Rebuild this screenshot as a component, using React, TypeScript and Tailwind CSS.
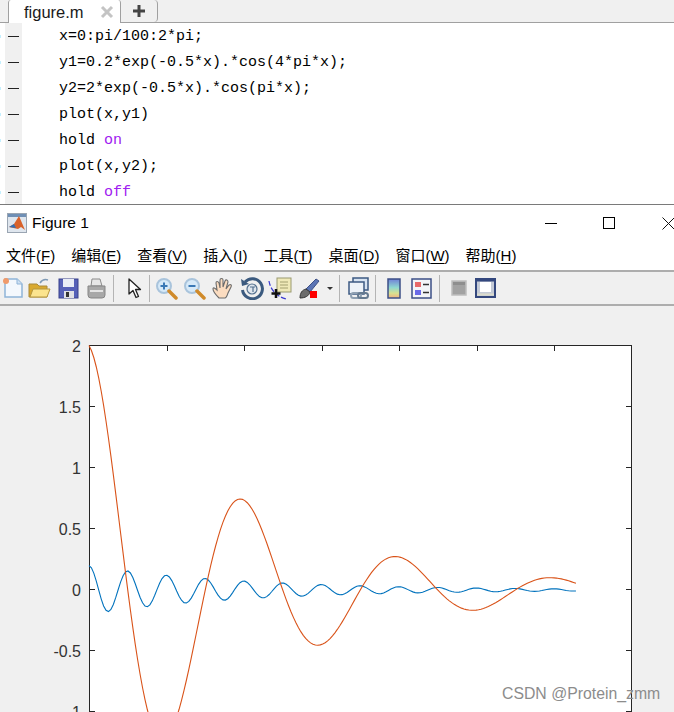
import React from 'react';

const codeLines = [
  [['x=0:pi/100:2*pi;', 'text-black']],
  [['y1=0.2*exp(-0.5*x).*cos(4*pi*x);', 'text-black']],
  [['y2=2*exp(-0.5*x).*cos(pi*x);', 'text-black']],
  [['plot(x,y1)', 'text-black']],
  [['hold ', 'text-black'], ['on', 'text-[#a020f0]']],
  [['plot(x,y2);', 'text-black']],
  [['hold ', 'text-black'], ['off', 'text-[#a020f0]']],
];

const menus = [
  ['文件(', 'F', ')'],
  ['编辑(', 'E', ')'],
  ['查看(', 'V', ')'],
  ['插入(', 'I', ')'],
  ['工具(', 'T', ')'],
  ['桌面(', 'D', ')'],
  ['窗口(', 'W', ')'],
  ['帮助(', 'H', ')'],
];

// plot geometry, in svg coordinates
const X0 = 89;
const Y0 = 590;
const SX = 77.5;
const SY = 122.2;

function curve(f: (x: number) => number) {
  const pts: string[] = [];
  for (let i = 0; i <= 200; i++) {
    const x = (i * Math.PI) / 100;
    pts.push(`${(X0 + x * SX).toFixed(2)},${(Y0 - f(x) * SY).toFixed(2)}`);
  }
  return pts.join(' ');
}

const y1 = (x: number) => 0.2 * Math.exp(-0.5 * x) * Math.cos(4 * Math.PI * x);
const y2 = (x: number) => 2 * Math.exp(-0.5 * x) * Math.cos(Math.PI * x);

function Icon({ w = 24, children }: { w?: number; children: React.ReactNode }) {
  return (
    <svg width={w} height="24" viewBox={`0 0 ${w} 24`} className="shrink-0 blur-[0.3px]">
      {children}
    </svg>
  );
}

function Sep({ className }: { className: string }) {
  return <div className={`h-[27px] w-px shrink-0 bg-[#b4b4b4] ${className}`} />;
}

function Toolbar() {
  return (
    <div className="box-content flex h-[32px] items-center border-y-2 border-[#adadad] bg-[#f0f0f0] pl-px">
      <Icon>
        <path d="M4 3h12l5 5v13H4z" fill="#f4f8fd" stroke="#8fb4d8" strokeWidth="1.5" />
        <path d="M16 3v5h5" fill="#cfe0f2" stroke="#8fb4d8" />
        <circle cx="5" cy="5" r="3" fill="#f09a6a" />
      </Icon>
      <Icon w={30}>
        <path d="M4 8h8l2 2h8v11H4z" fill="#d9a92f" stroke="#a98a3a" />
        <path d="M5 21l3-8h17l-3 8z" fill="#fbe48e" stroke="#b5973f" />
        <path d="M15 7c2-3 5-4 8-3" fill="none" stroke="#7f9ab5" strokeWidth="1.5" />
      </Icon>
      <Icon w={29}>
        <rect x="4" y="3" width="19" height="19" fill="#5560b8" stroke="#39408a" />
        <rect x="8" y="3" width="11" height="8" fill="#e8ecf6" />
        <rect x="9" y="15" width="10" height="7" fill="#dfe0e6" />
        <rect x="11" y="16" width="3" height="5" fill="#333" />
      </Icon>
      <Icon w={29}>
        <path d="M8 3h8l2 7H7z" fill="#e6e6e6" stroke="#8a8a8a" />
        <path d="M4 10h17v9a3 3 0 0 1-3 3H7a3 3 0 0 1-3-3z" fill="#a8a8a8" stroke="#858585" />
        <rect x="6" y="14" width="13" height="2" fill="#e4e4e4" />
      </Icon>
      <Sep className="mr-[7px]" />
      <Icon w={25}>
        <path d="M8 3v15l4-3.500 3 7 2.500-1-3-7h5z" fill="#fff" stroke="#222" strokeWidth="1.3" strokeLinejoin="round" />
      </Icon>
      <Sep className="ml-[3px] mr-[4px]" />
      <Icon w={28}>
        <circle cx="10" cy="10" r="7" fill="#d6e9f8" stroke="#a9c4dc" strokeWidth="2" />
        <path d="M6.500 10h7M10 6.500v7" stroke="#3a78b5" strokeWidth="2" />
        <path d="M15 15l7 7" stroke="#d08a2a" strokeWidth="3.500" strokeLinecap="round" />
      </Icon>
      <Icon w={28}>
        <circle cx="10" cy="10" r="7" fill="#d6e9f8" stroke="#a9c4dc" strokeWidth="2" />
        <path d="M6.500 10h7" stroke="#3a78b5" strokeWidth="2" />
        <path d="M15 15l7 7" stroke="#d08a2a" strokeWidth="3.500" strokeLinecap="round" />
      </Icon>
      <Icon w={29}>
        <path
          d="M9 22c-2-2-6-6-6-9 0-2 2-1 4 1L6 7c0-2 2-2 3 0l1 5V4c0-2 3-2 3 0v7l2-6c1-2 3-1 3 1l-2 7 3-4c2-1 3 0 2 2l-3 6c-1 3-2 5-3 5z"
          fill="#fbdcc0"
          stroke="#6c6c6c"
          strokeWidth="1.1"
        />
      </Icon>
      <Icon w={28}>
        <path d="M6 6a10 10 0 1 1-2.500 8" fill="none" stroke="#3b5a7f" strokeWidth="3" />
        <path d="M2 3l1 7 7-2z" fill="#3b5a7f" />
        <circle cx="13" cy="13" r="5" fill="#dfe6ee" stroke="#53708f" strokeWidth="1.2" />
        <path d="M11 11h5M14 11v5" stroke="#53708f" strokeWidth="1.2" />
      </Icon>
      <Icon w={29}>
        <rect x="10" y="2" width="14" height="14" fill="#efe9b8" stroke="#9a9a70" />
        <path d="M13 6h8M13 9h8M13 12h8" stroke="#a3a070" />
        <path d="M2 5c1 7 6 15 17 18" fill="none" stroke="#3a3ad0" strokeWidth="1.2" strokeDasharray="5 2" />
        <path d="M9 13v9M4.500 17.500h9" stroke="#111" strokeWidth="2.500" />
      </Icon>
      <Icon w={25}>
        <path d="M10 13l10-10 3 2-9 11z" fill="#5a74b5" stroke="#3c4f86" />
        <path d="M4 22c0-5 2-8 6-9l4 3c-1 4-5 6-10 6z" fill="#6c6c6c" stroke="#333" />
        <rect x="14" y="15" width="7" height="7" fill="#f00" />
      </Icon>
      <Icon w={14}>
        <path d="M6 11h6l-3 3z" fill="#333" />
      </Icon>
      <Sep className="ml-[4px] mr-[6px]" />
      <Icon w={26}>
        <rect x="7" y="2" width="15" height="12" fill="#d7e3f1" stroke="#3c5a82" strokeWidth="1.5" />
        <rect x="3" y="6" width="15" height="12" fill="#edf2f8" stroke="#3c5a82" strokeWidth="1.5" />
        <rect x="5" y="17" width="10" height="5" rx="2.500" fill="none" stroke="#8fa0b2" strokeWidth="2" />
        <rect x="12" y="17" width="10" height="5" rx="2.500" fill="none" stroke="#657a90" strokeWidth="2" />
      </Icon>
      <Sep className="ml-[3px] mr-[8px]" />
      <Icon w={25}>
        <defs>
          <linearGradient id="cbar" x1="0" y1="0" x2="0" y2="1">
            <stop offset="0" stopColor="#6f7fd8" />
            <stop offset="0.45" stopColor="#8fd8d0" />
            <stop offset="0.75" stopColor="#d8e090" />
            <stop offset="1" stopColor="#f0b080" />
          </linearGradient>
        </defs>
        <rect x="4" y="3" width="12" height="19" fill="url(#cbar)" stroke="#3c4f86" strokeWidth="1.5" />
      </Icon>
      <Icon w={28}>
        <rect x="3" y="3" width="19" height="19" fill="#f3f5f8" stroke="#3c4f86" strokeWidth="1.5" />
        <rect x="6" y="6" width="6" height="5" fill="#e86a6a" />
        <rect x="6" y="14" width="6" height="5" fill="#6a6ae8" />
        <path d="M14 8.500h6M14 16.500h6" stroke="#333" strokeWidth="1.5" />
      </Icon>
      <Sep className="ml-[2px] mr-[8px]" />
      <Icon w={25}>
        <rect x="4" y="5" width="14" height="14" fill="#a2a2a2" stroke="#bdbdbd" strokeWidth="1.5" />
        <rect x="5" y="6" width="12" height="3" fill="#8e8e8e" />
      </Icon>
      <Icon w={28}>
        <rect x="3" y="3" width="19" height="18" fill="#c4cad6" stroke="#34487e" strokeWidth="2" />
        <rect x="3" y="3" width="19" height="2.500" fill="#34487e" />
        <rect x="7" y="6" width="11" height="10" fill="#fff" />
        <path d="M4 18.500h17" stroke="#dcdccc" strokeWidth="2" />
      </Icon>
    </div>
  );
}

function Plot() {
  const xTicks = [1, 2, 3, 4, 5, 6];
  const yTicks = [2, 1.5, 1, 0.5, 0, -0.5, -1];
  return (
    <div className="relative h-[406px] overflow-hidden bg-[#f0f0f0]">
      <svg width="674" height="406" viewBox="0 306 674 406" className="block">
        <rect x="89.500" y="345.500" width="542" height="380" fill="#fff" stroke="#262626" />
        {xTicks.map((t) => (
          <path key={t} d={`M${Math.round(X0 + t * SX) + 0.5} 346v5`} stroke="#262626" />
        ))}
        {yTicks.map((t) => {
          const y = Math.round(Y0 - t * SY) - 0.5;
          return (
            <g key={t}>
              <path d={`M90 ${y}h5M631 ${y}h-5`} stroke="#262626" />
              <text
                x="81"
                y={y + 6.5}
                textAnchor="end"
                fontSize="16"
                fill="#333333"
                fontFamily="'Liberation Sans', Arial, sans-serif"
              >
                {t}
              </text>
            </g>
          );
        })}
        <polyline points={curve(y1)} fill="none" stroke="#0072bd" strokeWidth="1.1" />
        <polyline points={curve(y2)} fill="none" stroke="#d95319" strokeWidth="1.1" />
      </svg>
      <span className="absolute left-[502px] top-[378px] font-['Liberation_Sans',sans-serif] text-[15.800px] leading-[20px] text-[#8c8c8c]">
        CSDN @Protein_zmm
      </span>
    </div>
  );
}

export default function App() {
  return (
    <div className="h-[712px] w-[674px] overflow-hidden bg-white font-['Liberation_Sans','Noto_Sans_CJK_SC',sans-serif]">
      {/* editor tabs */}
      <div className="flex h-[23px] border-b border-[#a0a0a0] bg-[#f0f0f0] pl-[8px]">
        <div className="relative -mb-px flex h-[23px] w-[113px] items-center rounded-t-[3px] border-x border-[#a0a0a0] bg-white pl-[15px]">
          <span className="text-[16.500px] leading-[20px] text-[#1a1a1a]">figure.m</span>
          <svg width="14" height="14" viewBox="0 0 14 14" className="ml-[16px] mt-[1px] blur-[0.4px]">
            <path d="M2 2l10 10M12 2L2 12" stroke="#c4c4c4" strokeWidth="3" />
          </svg>
        </div>
        <div className="flex h-[22px] w-[37px] items-center justify-center rounded-br-[4px] rounded-tr-[4px] border-r border-[#a0a0a0]">
          <svg width="14" height="14" viewBox="0 0 14 14">
            <path d="M7 1v12M1 7h12" stroke="#444" strokeWidth="3" />
          </svg>
        </div>
      </div>

      {/* code */}
      <div className="flex h-[181px] flex-col overflow-hidden">
        {codeLines.map((parts, i) => (
          <div key={i} className="flex h-[26px] shrink-0">
            <div className="h-[3px] w-px self-center bg-[#c4f0ff]" />
            <div className="ml-[4px] flex w-[17px] items-center justify-center bg-[#f0f0f0]">
              <div className="h-px w-[11px] bg-[#222]" />
            </div>
            <pre className="pl-[37px] pt-px font-['Liberation_Mono',monospace] text-[15px] leading-[26px]">
              {parts.map(([text, color], j) => (
                <span key={j} className={color}>
                  {text}
                </span>
              ))}
            </pre>
          </div>
        ))}
      </div>

      {/* figure window */}
      <div className="border-t border-[#7a7a7a]">
        <div className="flex h-[36px] items-center bg-white">
          <svg width="20" height="20" viewBox="0 0 20 20" className="ml-[7px]">
            <rect x="0.500" y="0.500" width="19" height="19" fill="#dfe6ee" stroke="#9aa5b2" />
            <rect x="1" y="1" width="18" height="3" fill="#6f8fb5" />
            <path d="M2 14l5-3 5-8 6 14-4-3-3 2z" fill="#d9622b" />
            <path d="M2 14l5-3 2 4z" fill="#2f6fb5" />
          </svg>
          <span className="ml-[5px] text-[15.500px] leading-[20px] text-black">Figure 1</span>
          <div className="ml-auto flex items-center">
            <div className="mr-[46px] h-px w-[12px] bg-black" />
            <div className="mr-[47px] h-[12px] w-[12px] border border-black" />
            <svg width="13" height="13" viewBox="0 0 13 13" className="-mr-px">
              <path d="M0.500 0.500l12 12M12.500 0.500l-12 12" stroke="#111" />
            </svg>
          </div>
        </div>
        <div className="flex h-[29px] items-center gap-[16px] bg-white pl-[6px] text-[15px] leading-[18px] text-black">
          {menus.map(([a, k, b]) => (
            <span key={k} className="whitespace-nowrap">
              {a}
              <span className="underline underline-offset-2">{k}</span>
              {b}
            </span>
          ))}
        </div>
        <Toolbar />
        <Plot />
      </div>
    </div>
  );
}
